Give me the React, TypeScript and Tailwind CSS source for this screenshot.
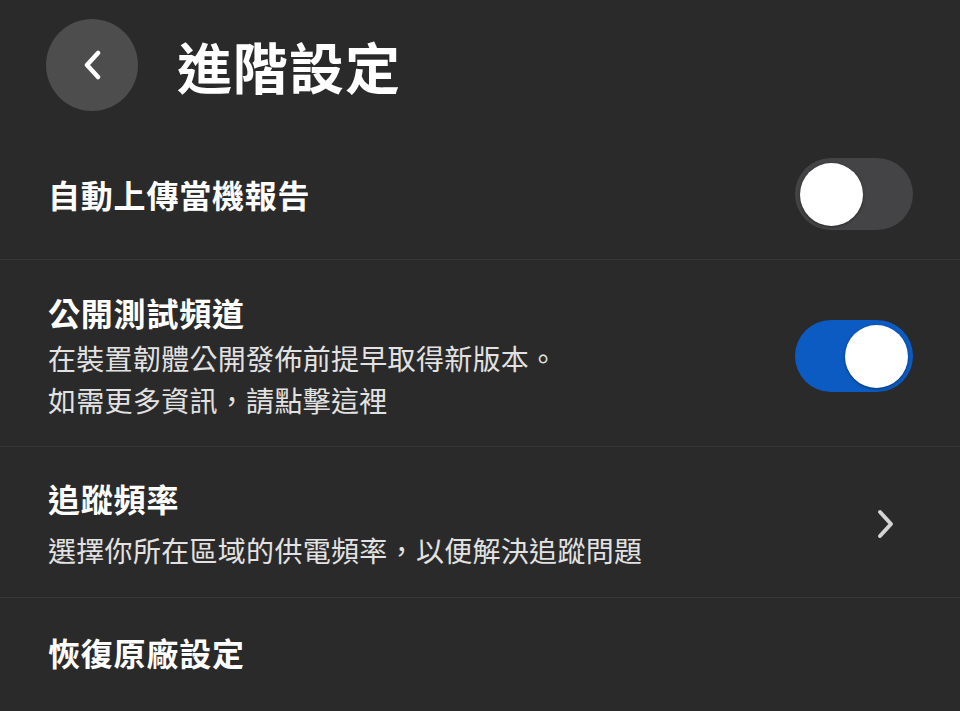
const font = { fontFamily: '"Noto Sans CJK TC", "Noto Sans", sans-serif' };

const Toggle = ({ on }: { on: boolean }) => (
  <div
    className={`flex h-[72px] w-[118px] shrink-0 items-center rounded-full px-[5px] ${
      on ? 'justify-end bg-[#0b5bc2]' : 'justify-start bg-[#444446]'
    }`}
  >
    <div className="h-[63px] w-[63px] rounded-full bg-white shadow-[0_1px_3px_rgba(0,0,0,0.4)]" />
  </div>
);

const Divider = () => <div className="h-px w-full bg-[#373737]" />;

const App = () => {
  return (
    <div className="h-[711px] w-full overflow-hidden bg-[#2a2a2a] text-white" style={font}>
      <header className="flex items-center pl-[46px] pt-[19px]">
        <button className="flex h-[92px] w-[92px] items-center justify-center rounded-full bg-[#4d4d4d]">
          <svg width="20" height="30" viewBox="0 0 20 30" fill="none">
            <polyline
              points="16,3 5,15 16,27"
              stroke="white"
              strokeWidth="4.5"
              strokeLinecap="round"
              strokeLinejoin="round"
            />
          </svg>
        </button>
        <h1 className="ml-[39px] text-[55px] font-bold leading-none tracking-[1px]">進階設定</h1>
      </header>

      <div className="mt-[18px] flex h-[130px] items-center justify-between pl-[48px] pr-[47px]">
        <span className="text-[32px] font-bold leading-[40px] tracking-[0.8px]">自動上傳當機報告</span>
        <Toggle on={false} />
      </div>
      <Divider />

      <div className="flex h-[186px] items-center justify-between pl-[48px] pr-[47px] pt-[6px]">
        <div>
          <div className="text-[32px] font-bold leading-[40px] tracking-[0.8px]">公開測試頻道</div>
          <div className="mt-[5px] text-[28px] leading-[42px] tracking-[0.3px] text-[#e2e2e2]">
            在裝置韌體公開發佈前提早取得新版本。
            <br />
            如需更多資訊，請點擊這裡
          </div>
        </div>
        <Toggle on={true} />
      </div>
      <Divider />

      <div className="flex h-[150px] items-center justify-between pl-[48px] pr-[63px] pt-[4px]">
        <div>
          <div className="text-[32px] font-bold leading-[40px] tracking-[0.8px]">追蹤頻率</div>
          <div className="mt-[11px] text-[28px] leading-[42px] tracking-[0.3px] text-[#e2e2e2]">
            選擇你所在區域的供電頻率，以便解決追蹤問題
          </div>
        </div>
        <svg width="22" height="30" viewBox="0 0 22 30" fill="none">
          <polyline
            points="5,3 16,15 5,27"
            stroke="#d4d4d4"
            strokeWidth="4"
            strokeLinecap="round"
            strokeLinejoin="round"
          />
        </svg>
      </div>
      <Divider />

      <div className="pl-[48px] pt-[34px]">
        <div className="text-[32px] font-bold leading-[40px] tracking-[0.8px]">恢復原廠設定</div>
      </div>
    </div>
  );
};

export default App;
